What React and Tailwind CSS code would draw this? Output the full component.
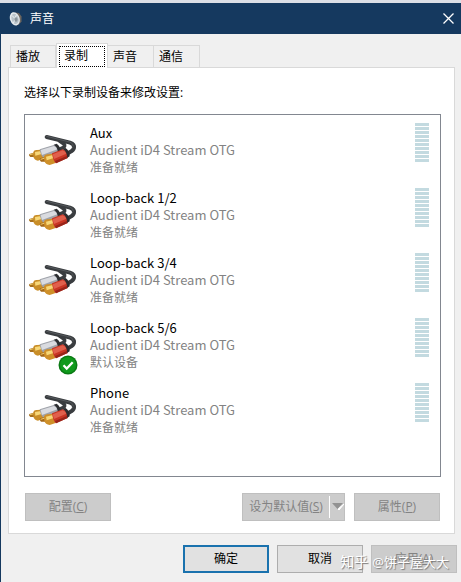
import React from 'react';

const DEVICES = [
    { name: 'Aux', status: '准备就绪' },
    { name: 'Loop-back 1/2', status: '准备就绪' },
    { name: 'Loop-back 3/4', status: '准备就绪' },
    { name: 'Loop-back 5/6', status: '默认设备', isDefault: true },
    { name: 'Phone', status: '准备就绪' },
];

const TABS = ['播放', '录制', '声音', '通信'];

const SpeakerIcon = () => (
    <svg viewBox="0 0 16 16" className="w-4 h-4" aria-hidden="true">
        <path d="M7 1.500 11 2l2.500 3.500v5L11 13.500l-3 1z" fill="#6d665f" />
        <ellipse cx="6.8" cy="7.8" rx="4.800" ry="6.800" transform="rotate(-18 6.8 7.8)" fill="#e6ebee" />
        <ellipse cx="7" cy="7.800" rx="3.500" ry="5.300" transform="rotate(-18 7 7.8)" fill="#b9c3c9" />
        <path d="M4 4.500 7 7.500 8.500 3.500M7 8l-1.500 4" stroke="#eef3f5" strokeWidth="1" fill="none" />
        <ellipse cx="8" cy="8.500" rx="1.600" ry="2.200" fill="#8a949b" />
    </svg>
);

const CableIcon = () => (
    <svg viewBox="0 0 162 126" className="w-[54px] h-[42px]" aria-hidden="true">
        <g fill="none" strokeLinecap="round" strokeLinejoin="round">
            <path d="M100 38 114 48Q119 54 111 59L98 65" stroke="#3a3d40" strokeWidth="11" />
            <path d="M62 27 132 44Q146 49 144 59Q142 67 132 72L118 80" stroke="#3a3d40" strokeWidth="12" />
            <path d="M62 25 131 42Q142 46 142 54" stroke="#55595d" strokeWidth="3" />
        </g>
        {/* white plug */}
        <path d="M10 78 28 73 31 87 13 87Q7 83 10 78Z" fill="#a8701c" />
        <path d="M12 80 28 76" stroke="#edc765" strokeWidth="3" />
        <path d="M22 72Q24 65 33 66L46 65 53 91 36 98Q25 96 22 86Z" fill="#c98e28" />
        <path d="M27 72 45 69 47 78 28 83Z" fill="#f7d878" />
        <path d="M41 64 83 51Q93 52 97 62L98 75 55 92Q44 84 41 64Z" fill="#9fa2aa" />
        <path d="M44 66 84 54Q91 56 94 64L48 81Z" fill="#d9dbe0" />
        <path d="M83 50Q94 55 96 74L103 70Q104 55 92 47Z" fill="#2c2e31" />
        {/* red plug */}
        <path d="M42 91 60 86 64 101 45 101Q39 96 42 91Z" fill="#a46819" />
        <path d="M44 94 61 89" stroke="#f0ca69" strokeWidth="3" />
        <path d="M54 85Q57 78 66 79L81 77 89 105 71 111Q58 109 55 99Z" fill="#cf9029" />
        <path d="M60 86 80 81 83 90 62 97Z" fill="#f7d878" />
        <path d="M78 76 110 64Q120 66 124 76L125 90 90 106Q81 99 78 76Z" fill="#c83524" />
        <path d="M80 79 110 67Q118 70 121 77L84 93Z" fill="#e0604d" />
        <path d="M90 106 125 90 124 83 87 99Z" fill="#98241a" />
        <path d="M110 63Q122 68 124 89L131 85Q132 70 119 60Z" fill="#2c2b2e" />
    </svg>
);

const DefaultBadge = () => (
    <svg viewBox="0 0 20 20" className="absolute left-8 top-8 w-5 h-5" aria-hidden="true">
        <circle cx="10" cy="10" r="9.500" fill="#0b7a14" />
        <circle cx="10" cy="10" r="8" fill="#109a1c" />
        <path d="m5.500 10.300 3.200 3.200 6-6.300" fill="none" stroke="#fff" strokeWidth="2.300" />
    </svg>
);

const LevelMeter = () => (
    <div className="flex flex-col gap-px w-[14px]">
        {Array.from({ length: 10 }, (_, i) => (
            <div key={i} className="h-[3px] bg-[#c3dae0]" />
        ))}
    </div>
);

const DeviceRow = ({ device }) => (
    <li className="flex items-start h-[65px] pl-px pr-[11px] pt-2">
        <div className="relative mt-[5px] mr-[10px] shrink-0">
            <CableIcon />
            {device.isDefault && <DefaultBadge />}
        </div>
        <div className="flex-1 pt-px leading-[17px] text-[#838383] font-['Noto_Sans_CJK_SC',sans-serif]">
            <p className="text-[13px] text-black">{device.name}</p>
            <p className="text-[13px]">Audient iD4 Stream OTG</p>
            <p>{device.status}</p>
        </div>
        <LevelMeter />
    </li>
);

const disabledButton = 'h-7 border border-[#bfbfbf] bg-[#cccccc] text-[#838383]';

const App = () => {
    return (
        <div className="relative flex flex-col min-h-screen bg-[#f0f0f0] text-xs text-black font-['Open_Sans','Noto_Sans_CJK_SC',sans-serif]">
            <div className="h-[3px] bg-[#dcdfe6]" />
            <header className="flex items-center h-[31px] pl-2 pr-[6px] bg-[#15395f] text-white">
                <SpeakerIcon />
                <h1 className="flex-1 ml-[6px]">声音</h1>
                <button aria-label="关闭" className="p-px">
                    <svg viewBox="0 0 11 11" className="w-[11px] h-[11px]" aria-hidden="true">
                        <path d="m.5.5 10 10m0-10-10 10" stroke="#fff" strokeWidth="1.3" />
                    </svg>
                </button>
            </header>

            <main className="flex-1 border-l border-[#15395f] pl-[7px] pr-1">
                <div role="tablist" className="flex items-end h-[33px] pl-[2px]">
                    {TABS.map((tab) =>
                        tab === '录制' ? (
                            <button
                                key={tab}
                                role="tab"
                                aria-selected="true"
                                className="w-[52px] h-[25px] -mb-px p-[2px] border border-b-0 border-[#d9d9d9] bg-white"
                            >
                                <span className="block h-[21px] pl-1 border border-dotted border-black text-left leading-[17px]">{tab}</span>
                            </button>
                        ) : (
                            <button
                                key={tab}
                                role="tab"
                                aria-selected="false"
                                className="w-[46px] h-[22px] pl-[5px] border border-l-0 border-b-0 first:border-l border-[#d9d9d9] text-left"
                            >
                                {tab}
                            </button>
                        )
                    )}
                </div>

                <section className="mr-[2px] pl-[15px] pr-[13px] pt-[15px] pb-3 border border-[#d9d9d9] bg-white">
                    <p className="leading-5">选择以下录制设备来修改设置:</p>
                    <ul className="mt-[11px] pb-9 border border-[#828790]">
                        {DEVICES.map((device) => (
                            <DeviceRow key={device.name} device={device} />
                        ))}
                    </ul>
                    <div className="flex mt-4 px-px">
                        <button disabled className={`${disabledButton} w-[86px]`}>
                            配置(<u>C</u>)
                        </button>
                        <div className="flex ml-auto mr-[9px]">
                            <button disabled className={`${disabledButton} w-[87px] border-r-0`}>
                                设为默认值(<u>S</u>)
                            </button>
                            <button disabled aria-label="更多默认值选项" className="flex items-center h-7 w-4 border border-l-0 border-[#bfbfbf] bg-[#cccccc]">
                                <span className="w-px h-[22px] shrink-0 bg-white" />
                                <svg viewBox="0 0 12 8" className="w-3 h-2 ml-[2px] shrink-0" aria-hidden="true">
                                    <path d="M12 1 7 7 6 6z" fill="#fff" stroke="#fff" />
                                    <path d="M0 0h11L5.500 6z" fill="#929292" />
                                </svg>
                            </button>
                        </div>
                        <button disabled className={`${disabledButton} w-[86px]`}>
                            属性(<u>P</u>)
                        </button>
                    </div>
                </section>

                <footer className="flex justify-end gap-2 pt-[11px]">
                    <button className="w-[86px] h-7 border-2 border-[#1a72ae] bg-[#e1e1e1]">确定</button>
                    <button className="w-[86px] h-7 border border-[#adadad] bg-[#e1e1e1]">取消</button>
                    <button disabled className={`${disabledButton} w-[86px]`}>
                        应用(<u>A</u>)
                    </button>
                </footer>
            </main>

            <p className="absolute right-3 bottom-[10px] flex items-center gap-1 text-sm leading-5 text-white whitespace-nowrap [text-shadow:1px_1px_1px_#777]">
                <span>知乎</span>
                <span className="text-[13px]">@饼子屋大大</span>
            </p>
        </div>
    );
};

export default App;
